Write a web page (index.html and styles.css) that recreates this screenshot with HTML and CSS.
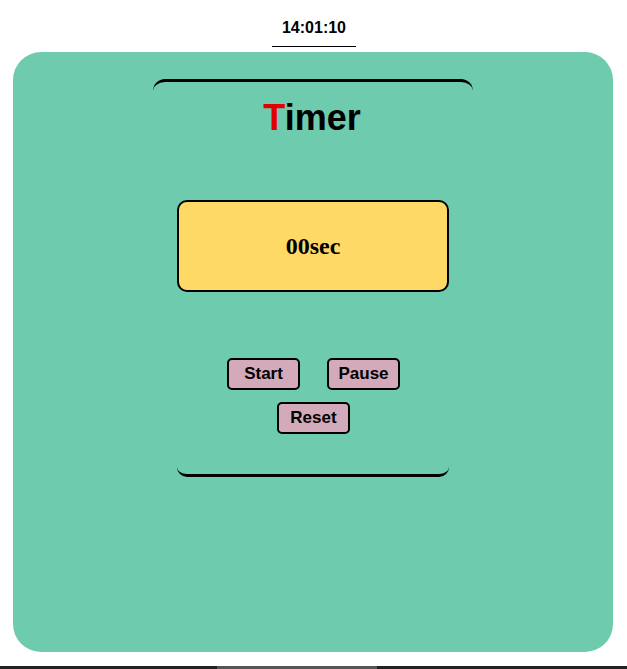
FILE: index.html
```html
<!DOCTYPE html>
<html>
<head>
<meta charset="utf-8">
<link rel="stylesheet" href="styles.css">
</head>
<body>
<header class="top">
  <span class="clock">14:01:10</span>
</header>
<main class="stage">
  <section class="card">
    <h1 class="title"><span class="accent">T</span>imer</h1>
    <div class="panel">
      <div class="display">00sec</div>
      <div class="controls">
        <div class="row">
          <button class="btn">Start</button>
          <button class="btn">Pause</button>
        </div>
        <div class="row">
          <button class="btn">Reset</button>
        </div>
      </div>
    </div>
  </section>
</main>
<div class="hscroll"><div class="thumb"></div></div>
</body>
</html>
```
FILE: styles.css
```css
html, body {
  margin: 0;
  padding: 0;
  background: #ffffff;
  font-family: "Liberation Sans", Arial, sans-serif;
}
.top {
  display: flex;
  justify-content: center;
  padding-top: 18px;
  padding-left: 1px;
}
.clock {
  display: inline-block;
  font-weight: bold;
  font-size: 16px;
  line-height: 20px;
  padding: 0 10px 8px;
  border-bottom: 1px solid #000;
  color: #000;
}
.stage {
  box-sizing: border-box;
  width: 600px;
  height: 600px;
  margin: 5px 0 0 13px;
  background: #6ecbae;
  border-radius: 28px;
  padding-top: 27px;
}
.card {
  width: 320px;
  margin: 0 auto;
  border-top: 3px solid #000;
  border-radius: 12px 12px 0 0;
  display: flex;
  flex-direction: column;
  align-items: center;
}
.title {
  margin: 15px 0 0;
  font-size: 36px;
  line-height: 41px;
  font-weight: bold;
  color: #000;
  padding-right: 2px;
}
.accent {
  color: #e00000;
}
.panel {
  width: 272px;
  margin-top: 62px;
  border-bottom: 3px solid #000;
  border-radius: 0 0 10px 10px;
  padding-bottom: 40px;
  box-sizing: border-box;
}
.display {
  box-sizing: border-box;
  height: 92px;
  background: #ffd966;
  border: 2px solid #000;
  border-radius: 10px;
  display: flex;
  align-items: center;
  justify-content: center;
  font-family: "Liberation Serif", "Times New Roman", serif;
  font-weight: bold;
  font-size: 24px;
  color: #000;
}
.controls {
  margin-top: 66px;
  display: flex;
  flex-direction: column;
  align-items: center;
  gap: 12px;
  padding-left: 1px;
}
.row {
  display: flex;
  gap: 27px;
}
.btn {
  box-sizing: border-box;
  width: 73px;
  height: 32px;
  background: #d3aab9;
  border: 2px solid #000;
  border-radius: 5px;
  font-family: "Liberation Sans", Arial, sans-serif;
  font-weight: bold;
  font-size: 17px;
  color: #000;
  padding: 0;
}
.hscroll {
  position: fixed;
  left: 0;
  right: 0;
  bottom: 0;
  height: 3px;
  background: #222222;
}
.thumb {
  position: absolute;
  left: 217px;
  width: 160px;
  top: 0;
  bottom: 0;
  background: #555555;
}
```
